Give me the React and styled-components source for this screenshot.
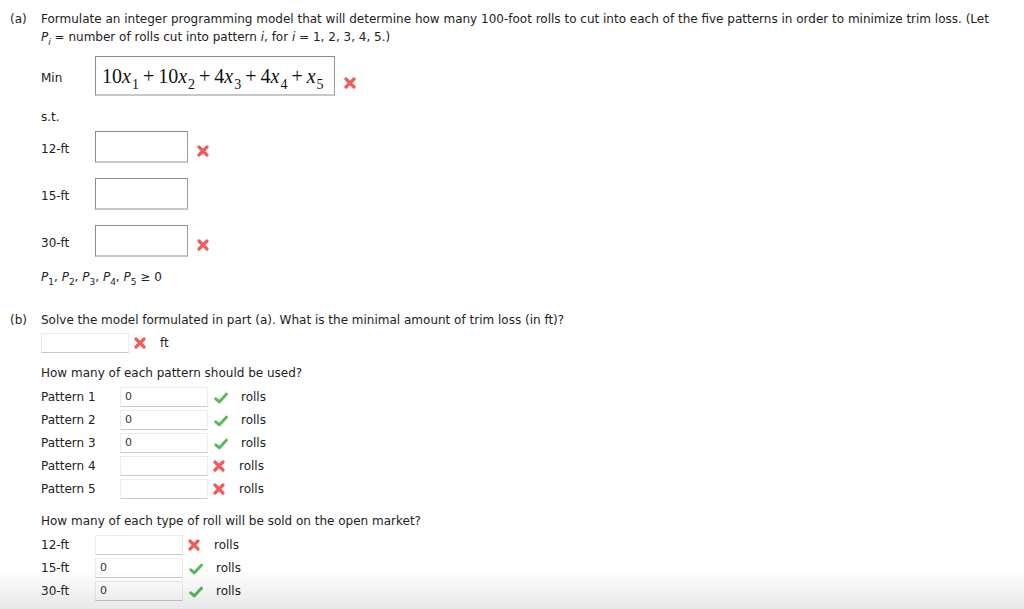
import React from "react";
import styled, { createGlobalStyle } from "styled-components";

const GlobalStyle = createGlobalStyle`
  html, body { margin: 0; padding: 0; background: #fff; }
  body {
    font-family: "DejaVu Sans", Verdana, sans-serif;
    font-size: 12px;
    color: #222;
  }
`;

const Page = styled.div`
  padding: 10px 0 0 10px;
`;

const Part = styled.section`
  display: grid;
  grid-template-columns: 31px 1fr;
  margin-top: ${(p) => p.$mt || 0}px;
`;

const PartLabel = styled.div`
  line-height: 18px;
`;

const Body = styled.div`
  display: flex;
  flex-direction: column;
  align-items: flex-start;
  margin-top: ${(p) => p.$mt || 0}px;
`;

const Line = styled.p`
  margin: ${(p) => p.$mt || 0}px 0 0;
  line-height: 18px;
  white-space: nowrap;
`;

const It = styled.i`
  font-style: italic;
`;

const Sub = styled.sub`
  font-size: 9px;
  vertical-align: -4px;
  line-height: 0;
`;

const Row = styled.div`
  display: flex;
  align-items: center;
  margin-top: ${(p) => p.$mt || 0}px;
  height: ${(p) => (p.$h ? `${p.$h}px` : "auto")};
`;

const RowLabel = styled.span`
  width: ${(p) => p.$w}px;
  flex: none;
  line-height: 18px;
  padding-top: ${(p) => p.$dy || 0}px;
`;

const InsetBox = styled.div`
  box-sizing: border-box;
  width: ${(p) => p.$w}px;
  height: ${(p) => p.$h}px;
  border-top: 1px solid #8c8c8c;
  border-left: 1px solid #8c8c8c;
  border-right: 1px solid #9c9c9c;
  border-bottom: 2px solid #c8c8c8;
  background: #fff;
  display: flex;
  align-items: center;
  padding-left: 6px;
`;

const Math = styled.span`
  font-family: "Liberation Serif", "DejaVu Serif", serif;
  font-size: 20px;
  color: #111;
  white-space: nowrap;
  line-height: 1;
`;

const MVar = styled.i`
  font-style: italic;
`;

const MSub = styled.sub`
  font-size: 14px;
  vertical-align: -6px;
  line-height: 0;
  margin-left: 1px;
`;

const MOp = styled.span`
  margin: 0 4px;
`;

const BoxStatus = styled.span`
  align-self: flex-end;
  margin: 0 0 ${(p) => p.$mb}px 9px;
  display: flex;
`;

const Field = styled.div`
  box-sizing: border-box;
  width: 88px;
  height: 20px;
  border: 1px solid #ececec;
  border-bottom: 1px solid #c9c9c9;
  padding: 0 4px;
  display: flex;
  align-items: center;
  font-size: 11px;
  color: #333;
`;

const Status = styled.span`
  display: flex;
  margin: ${(p) => (p.$ok ? "3px 13px 0 6px" : "0 14px 0 5px")};
`;

const Shade = styled.div`
  position: fixed;
  left: 0;
  right: 0;
  bottom: 0;
  height: 40px;
  pointer-events: none;
  background: linear-gradient(rgba(0, 0, 0, 0), rgba(0, 0, 0, 0.09));
`;

const Cross = () => (
  <svg width="12" height="12" viewBox="0 0 12 12">
    <path
      d="M2 2 L10 10 M10 2 L2 10"
      stroke="#f05c5c"
      strokeWidth="3.2"
      strokeLinecap="round"
      fill="none"
    />
  </svg>
);

const Check = () => (
  <svg width="14" height="12" viewBox="0 0 14 12">
    <path
      d="M1.8 6.8 L5.4 9.8 L12.4 2.2"
      stroke="#5cb85c"
      strokeWidth="3"
      strokeLinecap="round"
      strokeLinejoin="round"
      fill="none"
    />
  </svg>
);

const Mark = ({ ok }) => (ok ? <Check /> : <Cross />);

const patterns = [
  { name: "Pattern 1", value: "0", ok: true },
  { name: "Pattern 2", value: "0", ok: true },
  { name: "Pattern 3", value: "0", ok: true },
  { name: "Pattern 4", value: "", ok: false },
  { name: "Pattern 5", value: "", ok: false },
];

const market = [
  { name: "12-ft", value: "", ok: false },
  { name: "15-ft", value: "0", ok: true },
  { name: "30-ft", value: "0", ok: true },
];

const constraints = [
  { name: "12-ft", mt: 5, wrong: true },
  { name: "15-ft", mt: 15, wrong: false },
  { name: "30-ft", mt: 15, wrong: true },
];

const terms = [
  { c: "10", i: "1" },
  { c: "10", i: "2" },
  { c: "4", i: "3" },
  { c: "4", i: "4" },
  { c: "", i: "5" },
];

export default function App() {
  return (
    <>
      <GlobalStyle />
      <Page>
        <Part>
          <PartLabel>(a)</PartLabel>
          <Body>
            <Line>
              Formulate an integer programming model that will determine how many 100-foot rolls to cut into each of the five patterns in order to minimize trim loss. (Let
              <br />
              <It>P</It>
              <Sub><It>i</It></Sub> = number of rolls cut into pattern <It>i</It>, for <It>i</It> = 1, 2, 3, 4, 5.)
            </Line>
            <Row $mt={10}>
              <RowLabel $w={54} $dy={3}>Min</RowLabel>
              <InsetBox $w={240} $h={40}>
                <Math>
                  {terms.map((t, k) => (
                    <React.Fragment key={k}>
                      {k > 0 && <MOp>+</MOp>}
                      {t.c}
                      <MVar>x</MVar>
                      <MSub>{t.i}</MSub>
                    </React.Fragment>
                  ))}
                </Math>
              </InsetBox>
              <BoxStatus $mb={7}>
                <Cross />
              </BoxStatus>
            </Row>
            <Line $mt={12}>s.t.</Line>
            {constraints.map((c) => (
              <Row key={c.name} $mt={c.mt}>
                <RowLabel $w={54} $dy={3}>{c.name}</RowLabel>
                <InsetBox $w={93} $h={32} />
                {c.wrong && (
                  <BoxStatus $mb={6}>
                    <Cross />
                  </BoxStatus>
                )}
              </Row>
            ))}
            <Line $mt={11}>
              {[1, 2, 3, 4, 5].map((n) => (
                <React.Fragment key={n}>
                  <It>P</It>
                  <Sub>{n}</Sub>
                  {n < 5 ? ", " : " ≥ 0"}
                </React.Fragment>
              ))}
            </Line>
          </Body>
        </Part>

        <Part $mt={25}>
          <PartLabel>(b)</PartLabel>
          <Body>
            <Line>Solve the model formulated in part (a). What is the minimal amount of trim loss (in ft)?</Line>
            <Row $mt={4} $h={20}>
              <Field />
              <Status>
                <Cross />
              </Status>
              <span>ft</span>
            </Row>
            <Line $mt={11}>How many of each pattern should be used?</Line>
            <Body $mt={3}>
              {patterns.map((p) => (
                <Row key={p.name} $h={23}>
                  <RowLabel $w={79}>{p.name}</RowLabel>
                  <Field>{p.value}</Field>
                  <Status $ok={p.ok}>
                    <Mark ok={p.ok} />
                  </Status>
                  <span>rolls</span>
                </Row>
              ))}
            </Body>
            <Line $mt={12}>How many of each type of roll will be sold on the open market?</Line>
            <Body $mt={3}>
              {market.map((p) => (
                <Row key={p.name} $h={23}>
                  <RowLabel $w={54}>{p.name}</RowLabel>
                  <Field>{p.value}</Field>
                  <Status $ok={p.ok}>
                    <Mark ok={p.ok} />
                  </Status>
                  <span>rolls</span>
                </Row>
              ))}
            </Body>
          </Body>
        </Part>
      </Page>
      <Shade />
    </>
  );
}
